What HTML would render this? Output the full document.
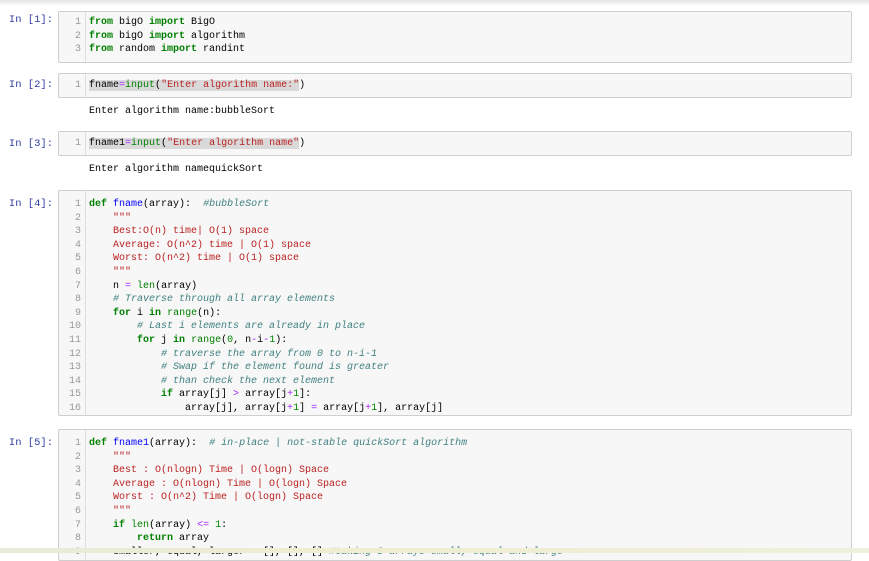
<!DOCTYPE html>
<html><head><meta charset="utf-8">
<style>
html,body{margin:0;padding:0;width:869px;height:553px;overflow:hidden;background:#fff;font-family:"Liberation Mono",monospace;}
.top{position:absolute;left:0;top:0;width:869px;height:6px;background:linear-gradient(#e4e4e4,#fff);}
.prompt{position:absolute;left:0;width:53px;text-align:right;color:#303f9f;font-size:10.5px;line-height:13.6px;}
.cell{position:absolute;left:58px;width:792px;background:#f7f7f7;border:1px solid #cfcfcf;border-radius:2px;overflow:hidden;}
.gut{position:absolute;left:0;top:0;bottom:0;width:26px;border-right:1px solid #ddd;}
.ln{position:absolute;left:0;width:22px;text-align:right;color:#999;font-size:10px;line-height:13.6px;}
.code{position:absolute;left:30px;white-space:pre;font-size:10px;line-height:13.6px;color:#000;}
.out{position:absolute;left:89px;font-size:10px;line-height:13.6px;white-space:pre;color:#000;}
.k{color:#008000;font-weight:bold}
.b{color:#008000}
.s{color:#ba2121}
.c{color:#408080;font-style:italic}
.n{color:#080}
.o{color:#aa22ff}
.f{color:#0000ff}
.hl{background:#d9d9d9}
.bot{position:absolute;left:0;top:548px;width:869px;height:5px;background:linear-gradient(90deg,#e7ebd9,#f0edd0 40%,#eef0dc);}
</style></head><body>
<div class="top"></div>

<div class="prompt" style="top:14px">In [1]:</div>
<div class="cell" style="top:11px;height:50px">
<div class="gut"></div>
<div class="ln" style="top:4px">1<br>2<br>3</div>
<div class="code" style="top:4px"><span class="k">from</span> bigO <span class="k">import</span> BigO
<span class="k">from</span> bigO <span class="k">import</span> algorithm
<span class="k">from</span> random <span class="k">import</span> randint</div>
</div>

<div class="prompt" style="top:79px">In [2]:</div>
<div class="cell" style="top:73px;height:23px">
<div class="gut"></div>
<div class="ln" style="top:5px">1</div>
<div class="code" style="top:5px"><span class="hl">fname<span class="o">=</span><span class="b">input</span>(<span class="s">"Enter algorithm name:"</span></span>)</div>
</div>
<div class="out" style="top:105px">Enter algorithm name:bubbleSort</div>

<div class="prompt" style="top:138px">In [3]:</div>
<div class="cell" style="top:131px;height:23px">
<div class="gut"></div>
<div class="ln" style="top:5px">1</div>
<div class="code" style="top:5px"><span class="hl">fname1<span class="o">=</span><span class="b">input</span>(<span class="s">"Enter algorithm name"</span></span>)</div>
</div>
<div class="out" style="top:163px">Enter algorithm namequickSort</div>

<div class="prompt" style="top:198px">In [4]:</div>
<div class="cell" style="top:190px;height:224px">
<div class="gut"></div>
<div class="ln" style="top:7px">1<br>2<br>3<br>4<br>5<br>6<br>7<br>8<br>9<br>10<br>11<br>12<br>13<br>14<br>15<br>16</div>
<div class="code" style="top:7px"><span class="k">def</span> <span class="f">fname</span>(array):  <span class="c">#bubbleSort</span>
    <span class="s">"""</span>
<span class="s">    Best:O(n) time| O(1) space</span>
<span class="s">    Average: O(n^2) time | O(1) space</span>
<span class="s">    Worst: O(n^2) time | O(1) space</span>
<span class="s">    """</span>
    n <span class="o">=</span> <span class="b">len</span>(array)
    <span class="c"># Traverse through all array elements</span>
    <span class="k">for</span> i <span class="k">in</span> <span class="b">range</span>(n):
        <span class="c"># Last i elements are already in place</span>
        <span class="k">for</span> j <span class="k">in</span> <span class="b">range</span>(<span class="n">0</span>, n<span class="o">-</span>i<span class="o">-</span><span class="n">1</span>):
            <span class="c"># traverse the array from 0 to n-i-1</span>
            <span class="c"># Swap if the element found is greater</span>
            <span class="c"># than check the next element</span>
            <span class="k">if</span> array[j] <span class="o">&gt;</span> array[j<span class="o">+</span><span class="n">1</span>]:
                array[j], array[j<span class="o">+</span><span class="n">1</span>] <span class="o">=</span> array[j<span class="o">+</span><span class="n">1</span>], array[j]</div>
</div>

<div class="prompt" style="top:437px">In [5]:</div>
<div class="cell" style="top:429px;height:130px">
<div class="gut"></div>
<div class="ln" style="top:7px">1<br>2<br>3<br>4<br>5<br>6<br>7<br>8<br>9</div>
<div class="code" style="top:7px"><span class="k">def</span> <span class="f">fname1</span>(array):  <span class="c"># in-place | not-stable quickSort algorithm</span>
    <span class="s">"""</span>
<span class="s">    Best : O(nlogn) Time | O(logn) Space</span>
<span class="s">    Average : O(nlogn) Time | O(logn) Space</span>
<span class="s">    Worst : O(n^2) Time | O(logn) Space</span>
<span class="s">    """</span>
    <span class="k">if</span> <span class="b">len</span>(array) <span class="o">&lt;=</span> <span class="n">1</span>:
        <span class="k">return</span> array
    smaller, equal, larger <span class="o">=</span> [], [], [] <span class="c">#taking 3 arrays small, equal and large</span></div>
</div>
<div class="bot"></div>
</body></html>
